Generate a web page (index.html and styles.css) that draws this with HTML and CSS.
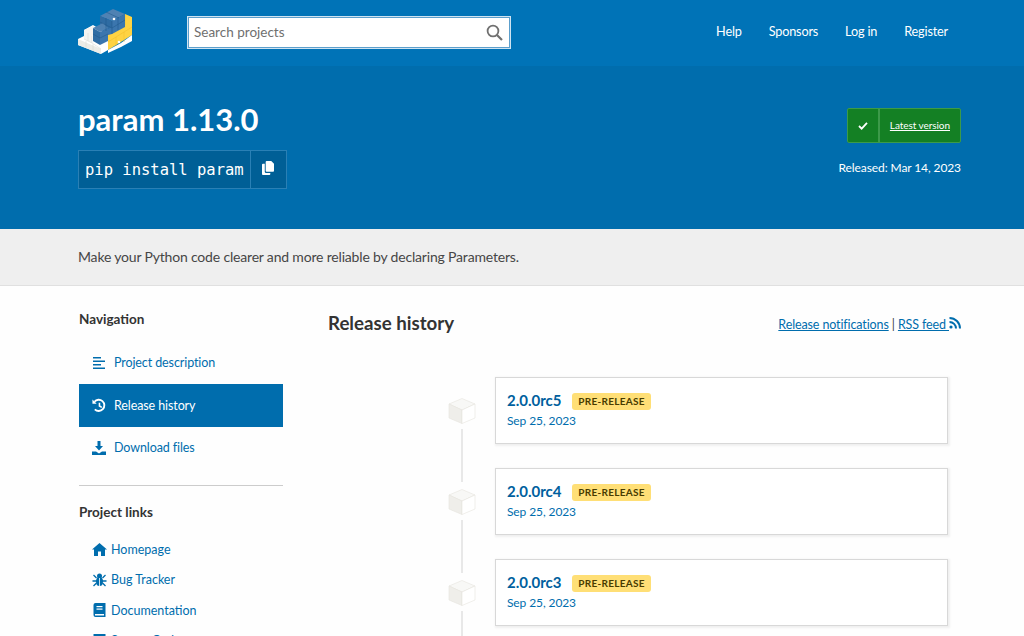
FILE: index.html
```html
<!DOCTYPE html>
<html lang="en">
<head>
  <meta charset="UTF-8" />
  <title>param 1.13.0</title>
  <link rel="stylesheet" href="styles.css">
</head>
<body>

<svg class="defs" width="0" height="0">
  <symbol id="cube" viewBox="0 0 28 26">
    <polygon points="14,0.500 27,6 14,12 1,6" fill="#f8f8f6" stroke="#e6e4de" stroke-width="0.600"/>
    <polygon points="1,6 14,12 14,25.500 1,20" fill="#efeeea" stroke="#e6e4de" stroke-width="0.600"/>
    <polygon points="27,6 14,12 14,25.500 27,20" fill="#fff" stroke="#e6e4de" stroke-width="0.600"/>
  </symbol>
</svg>

<!-- TOP BAR -->
<header class="site-header">
  <div class="wrap header-row">
    <svg class="logo" width="54" height="46" viewBox="0 0 54 46">
      <!-- white base -->
      <polygon points="0,31 6,28 6,22 15,17 30,26 30,42 23,46 0,37" fill="#fff"/>
      <polygon points="0,31 23,41 23,46 0,37" fill="#ecece7"/>
      <polygon points="6,22 15,18 22,23 14,28 14,35 6,31" fill="#f4f4f1"/>
      <path d="M6,31 14,35 23,41M8,33v6M15,36v7M14,28v7M10,25v8" stroke="#d4d4cd" stroke-width="0.500" fill="none"/>
      <!-- yellow -->
      <polygon points="30,25 47,17 47,6 54,9 54,27 30,42" fill="#ffd343"/>
      <polygon points="43,35 54,27 54,33 43,39 30,45 30,42" fill="#fff"/>
      <path d="M30,34 54,19M38,29v9M46,24v10M47,6v11" stroke="#f1bd2a" stroke-width="0.500" fill="none"/>
      <!-- blue -->
      <polygon points="22,8 35,1 47,6 34,13" fill="#4f82b3"/>
      <polygon points="22,8 34,13 34,26 22,21" fill="#2f6ca3"/>
      <polygon points="34,13 47,6 47,19 34,26" fill="#3b76ae"/>
      <polygon points="30,21 34,19 34,26 30,27" fill="#3b76ae"/>
      <polygon points="15,20 25,15 30,20 22,24" fill="#4f82b3"/>
      <polygon points="15,20 22,24 22,37 15,33" fill="#2f6ca3"/>
      <polygon points="22,24 30,20 30,33 22,37" fill="#3b76ae"/>
      <path d="M28,4 41,10M22,14 34,20 47,12M34,13v13M40,9v13M15,26 22,30 30,26M28,10v13" stroke="#1f5688" stroke-width="0.500" fill="none"/>
      <circle cx="36" cy="11" r="1.300" fill="#fff"/>
      <circle cx="41" cy="34" r="1.300" fill="#fff"/>
    </svg>
    <form class="search">
      <span class="search-text">Search projects</span>
      <svg width="17" height="17" viewBox="0 0 17 17" fill="none" stroke="#707070" stroke-width="1.800">
        <circle cx="7" cy="7" r="5.400"/>
        <line x1="11" y1="11" x2="16" y2="16" stroke-width="2.200"/>
      </svg>
    </form>
    <nav class="top-nav">
      <a>Help</a>
      <a>Sponsors</a>
      <a>Log in</a>
      <a>Register</a>
    </nav>
  </div>
</header>

<!-- BANNER -->
<section class="banner">
  <div class="wrap banner-row">
    <div>
      <h1>param 1.13.0</h1>
      <div class="pip">
        <code>pip install param</code>
        <span class="copy">
          <svg width="12" height="14" viewBox="0 0 13 15" fill="#fff">
            <path d="M5 0h5l3 3v7.500a1 1 0 0 1-1 1H5a1 1 0 0 1-1-1V1a1 1 0 0 1 1-1z"/>
            <path d="M3 3v8.500a1.500 1.500 0 0 0 1.500 1.500H9v1a1 1 0 0 1-1 1H1a1 1 0 0 1-1-1V4a1 1 0 0 1 1-1z"/>
          </svg>
        </span>
      </div>
    </div>
    <div class="status">
      <div class="latest">
        <span class="latest-icon">
          <svg width="10" height="8" viewBox="0 0 11 9" fill="none" stroke="#fff" stroke-width="2"><polyline points="1,4.500 4,7.500 10,1"/></svg>
        </span>
        <a>Latest version</a>
      </div>
      <p class="released">Released: Mar 14, 2023</p>
    </div>
  </div>
</section>

<section class="summary">
  <div class="wrap">Make your Python code clearer and more reliable by declaring Parameters.</div>
</section>

<!-- BODY -->
<div class="wrap content">
  <aside class="sidebar">
    <h3>Navigation</h3>
    <ul class="side-nav">
      <li>
        <svg width="14" height="14" viewBox="0 0 14 14" fill="#006dad"><rect x="1" y="1" width="8" height="1.500"/><rect x="1" y="4.500" width="12" height="1.500"/><rect x="1" y="8" width="8" height="1.500"/><rect x="1" y="11.500" width="12" height="1.500"/></svg>
        Project description
      </li>
      <li class="active">
        <svg width="15" height="15" viewBox="0 0 15 15" fill="none" stroke="#fff" stroke-width="2"><path d="M2.600 3.500A6 6 0 1 1 3 11.600"/><polygon points="0.500,1 5,5.500 0.500,5.500" fill="#fff" stroke="none"/><polyline points="8,4.500 8,8 10.500,9.500" stroke-width="1.700"/></svg>
        Release history
      </li>
      <li>
        <svg width="14" height="14" viewBox="0 0 14 14" fill="#006dad"><polygon points="5.500,0 8.500,0 8.500,5 11,5 7,9.500 3,5 5.500,5"/><path d="M0 10.500h4l3 2 3-2h4V14H0z"/></svg>
        Download files
      </li>
    </ul>
    <hr>
    <h3 class="links-title">Project links</h3>
    <ul class="link-list">
      <li>
        <svg width="15" height="13" viewBox="0 0 15 13" fill="#006dad"><polygon points="7.500,0 15,6.500 13,6.500 13,13 9,13 9,8.500 6,8.500 6,13 2,13 2,6.500 0,6.500"/></svg>
        Homepage
      </li>
      <li>
        <svg width="14" height="14" viewBox="0 0 14 14" fill="#006dad" stroke="#006dad"><ellipse cx="7" cy="8.500" rx="3.500" ry="4.500" stroke="none"/><circle cx="7" cy="3" r="2.500" stroke="none"/><path d="M1 2l3 3M13 2l-3 3M0 8h14M1 13l3-3M13 13l-3-3" fill="none" stroke-width="1.300"/><line x1="7" y1="5" x2="7" y2="13" stroke="#fff" stroke-width="0.800"/></svg>
        Bug Tracker
      </li>
      <li>
        <svg width="12" height="14" viewBox="0 0 12 14" fill="#006dad"><path d="M2 0h10v14H2a2 2 0 0 1-2-2V2a2 2 0 0 1 2-2z"/><rect x="3" y="3" width="6" height="1.200" fill="#fff"/><rect x="3" y="5.500" width="6" height="1.200" fill="#fff"/><rect x="1.500" y="11" width="9" height="1.500" fill="#fff"/></svg>
        Documentation
      </li>
      <li>
        <svg width="12" height="14" viewBox="0 0 12 14" fill="#006dad"><rect width="12" height="14"/></svg>
        Source Code
      </li>
    </ul>
  </aside>

  <main class="history">
    <div class="history-head">
      <h2>Release history</h2>
      <div class="history-links">
        <a>Release notifications</a> <span class="sep">|</span>
        <a>RSS feed
          <svg width="12" height="12" viewBox="0 0 12 12" fill="none" stroke="#006dad" stroke-width="2"><circle cx="2" cy="10" r="1.600" fill="#006dad" stroke="none"/><path d="M0.500 5a6.500 6.500 0 0 1 6.500 6.500"/><path d="M0.500 1a10.500 10.500 0 0 1 10.500 10.500"/></svg>
        </a>
      </div>
    </div>

    <div class="release">
      <svg class="cube" width="28" height="26"><use href="#cube"/></svg>
      <div class="release-card">
        <div class="version">2.0.0rc5 <span class="badge">pre-release</span></div>
        <div class="date">Sep 25, 2023</div>
      </div>
    </div>
    <div class="release">
      <svg class="cube" width="28" height="26"><use href="#cube"/></svg>
      <div class="release-card">
        <div class="version">2.0.0rc4 <span class="badge">pre-release</span></div>
        <div class="date">Sep 25, 2023</div>
      </div>
    </div>
    <div class="release">
      <svg class="cube" width="28" height="26"><use href="#cube"/></svg>
      <div class="release-card">
        <div class="version">2.0.0rc3 <span class="badge">pre-release</span></div>
        <div class="date">Sep 25, 2023</div>
      </div>
    </div>
  </main>
</div>

</body>
</html>
```

FILE: styles.css
```css
html, body {
  height: 636px;
  overflow: hidden;
}

body {
  margin: 0;
  font-family: 'Lato', sans-serif;
  font-size: 14px;
  color: #464646;
  background: #fefefe;
}

.defs { position: absolute; }

.wrap {
  width: 883px;
  margin-left: 78px;
}

/* top bar */
.site-header {
  height: 66px;
  background: #0073b7;
}

.header-row {
  display: flex;
  align-items: center;
  box-sizing: border-box;
  height: 66px;
  padding-bottom: 2px;
}

.logo { margin-top: -2px; }

.search {
  display: flex;
  align-items: center;
  justify-content: space-between;
  box-sizing: border-box;
  width: 322px;
  height: 31px;
  margin-left: 56px;
  padding: 0 6px 0 5px;
  background: #fff;
  border: 1px solid #5c9fcc;
  outline: 1px solid #cfe3f1;
}

.search-text {
  color: #6f6f6f;
  font-size: 13.500px;
}

.top-nav {
  display: flex;
  gap: 27px;
  margin-left: auto;
  margin-top: -2px;
  margin-right: 13px;
}

.top-nav a {
  color: #fff;
  font-size: 12.700px;
  letter-spacing: -0.18px;
}

/* banner */
.banner {
  height: 163px;
  background: #006dad;
  color: #fff;
}

.banner-row {
  display: flex;
  justify-content: space-between;
}

h1 {
  margin: 32px 0 10px;
  font-size: 31px;
  line-height: 42px;
  font-weight: 700;
}

.pip {
  display: inline-flex;
  height: 37px;
  background: #005f96;
  border: 1px solid #2a80b5;
}

.pip code {
  padding: 0 6px;
  line-height: 39px;
  font-family: 'DejaVu Sans Mono', monospace;
  font-size: 15.500px;
  border-right: 1px solid #2a80b5;
}

.copy {
  display: flex;
  align-items: center;
  justify-content: center;
  box-sizing: border-box;
  width: 35px;
  padding-bottom: 3px;
}

.status {
  display: flex;
  flex-direction: column;
  align-items: flex-end;
  padding-top: 42px;
}

.latest {
  display: flex;
  height: 33px;
  background: #148024;
  border: 1px solid #3c9a49;
  border-radius: 2px;
  font-size: 10px;
  letter-spacing: -0.06px;
}

.latest-icon {
  display: flex;
  align-items: center;
  justify-content: center;
  width: 30px;
  border-right: 2px solid #3c9a49;
}

.latest a {
  padding: 0 10px;
  line-height: 33px;
  text-decoration: underline;
}

.released {
  margin: 17px 0 0;
  font-size: 12px;
  letter-spacing: -0.1px;
}

.summary {
  height: 56px;
  line-height: 55px;
  background: #efefef;
  border-bottom: 1px solid #e0e0e0;
  font-size: 14px;
  letter-spacing: -0.18px;
}

/* body columns */
.content {
  display: flex;
  gap: 45px;
}

.sidebar {
  width: 204px;
  margin-left: 1px;
  flex-shrink: 0;
}

h3 {
  margin: 23px 0 0;
  font-size: 13.500px;
  line-height: 20px;
  font-weight: 700;
  color: #333;
}

.links-title { margin-top: 16px; }

.side-nav {
  list-style: none;
  margin: 12px 0 0;
  padding: 0;
  color: #006dad;
  font-size: 12.500px;
  letter-spacing: -0.1px;
}

.side-nav li {
  display: flex;
  align-items: center;
  gap: 8px;
  height: 43px;
  padding-left: 13px;
}

.side-nav li:last-child { height: 41px; }

.side-nav svg { width: 14px; }

.side-nav .active {
  background: #006dad;
  color: #fff;
}

hr {
  margin: 17px 0 0;
  border: 0;
  border-top: 1px solid #ccc;
}

.link-list {
  list-style: none;
  margin: 12px 0 0;
  padding: 0;
  color: #006dad;
  font-size: 12.500px;
}

.link-list li {
  display: flex;
  align-items: center;
  gap: 4px;
  height: 30.500px;
  padding-left: 13px;
}

.link-list svg { width: 15px; }

/* release history */
.history { flex: 1; }

.history-head {
  display: flex;
  align-items: center;
  justify-content: space-between;
  margin-top: 23px;
}

h2 {
  margin: 0;
  font-size: 18.700px;
  line-height: 28px;
  font-weight: 700;
  color: #333;
}

.history-links {
  margin-top: 2px;
  font-size: 12.500px;
  letter-spacing: -0.12px;
  color: #006dad;
}

.history-links a { text-decoration: underline; }
.sep { color: #444; }

.release {
  display: flex;
  align-items: center;
  position: relative;
  height: 91px;
  padding-left: 120px;
}

.history-head + .release { margin-top: 28px; }

.release::before {
  content: "";
  position: absolute;
  left: 133px;
  top: 64px;
  height: 53px;
  width: 2px;
  background: #e8e8e8;
}

.cube { flex-shrink: 0; }

.release-card {
  box-sizing: border-box;
  width: 453px;
  height: 67px;
  margin-left: 19px;
  padding: 12px 11px;
  background: #fff;
  border: 1px solid #d8d8d8;
  box-shadow: 1px 1px 2px 1px rgba(0,0,0,0.06);
}

.version {
  color: #005f9e;
  font-size: 15px;
  font-weight: 700;
  line-height: 20px;
}

.badge {
  display: inline-block;
  margin-left: 7px;
  padding: 0 6px;
  background: #ffdf76;
  border-radius: 3px;
  color: #473b00;
  font-size: 10px;
  line-height: 17px;
  font-weight: 700;
  text-transform: uppercase;
  letter-spacing: 0.3px;
  vertical-align: 1px;
}

.date {
  margin-top: 3px;
  color: #006dad;
  font-size: 12px;
  letter-spacing: -0.1px;
}
```
